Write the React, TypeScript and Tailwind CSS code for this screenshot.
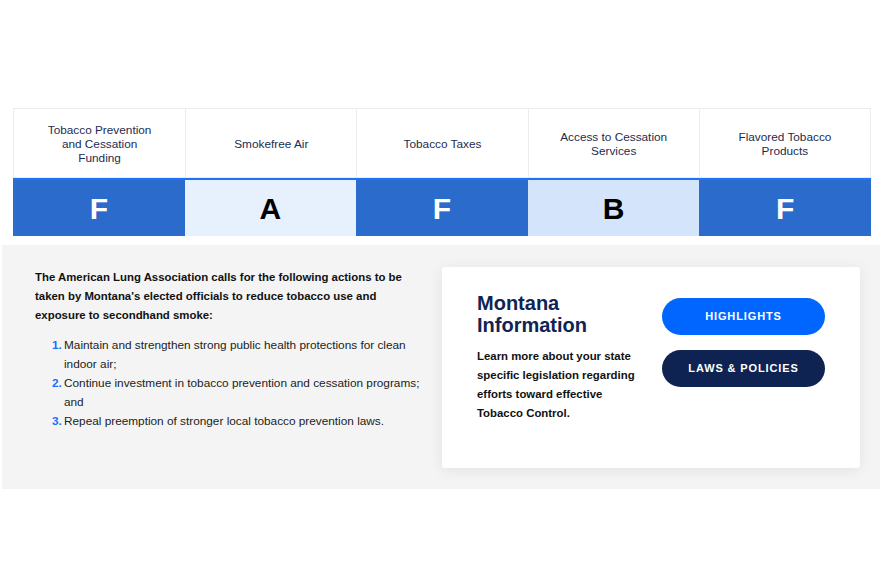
const grades = [
  { label: 'Tobacco Prevention and Cessation Funding', grade: 'F', tone: 'bg-[#2a6bcc] text-white' },
  { label: 'Smokefree Air', grade: 'A', tone: 'bg-[#e7f0fd] text-black' },
  { label: 'Tobacco Taxes', grade: 'F', tone: 'bg-[#2a6bcc] text-white' },
  { label: 'Access to Cessation Services', grade: 'B', tone: 'bg-[#d4e4fa] text-black' },
  { label: 'Flavored Tobacco Products', grade: 'F', tone: 'bg-[#2a6bcc] text-white' },
];

const actions = [
  'Maintain and strengthen strong public health protections for clean indoor air;',
  'Continue investment in tobacco prevention and cessation programs; and',
  'Repeal preemption of stronger local tobacco prevention laws.',
];

export default function App() {
  return (
    <div className="w-[880px] h-[563px] bg-white font-['Liberation_Sans',Arial,sans-serif] overflow-hidden">
      {/* grade table */}
      <div className="pt-[108px] pl-[13px] pr-[9px]">
        <div className="grid grid-cols-5 border border-[#ececec]">
          {grades.map((g, i) => (
            <div
              key={g.label}
              className={`h-[68px] flex items-center justify-center px-[28px] pt-[2px] text-center text-[11.8px] leading-[14px] text-[#1d2b4f] ${i > 0 ? 'border-l border-[#ececec]' : ''}`}
            >
              {g.label}
            </div>
          ))}
        </div>
        <div className="grid grid-cols-5 border-t-2 border-[#1f74f5]">
          {grades.map((g) => (
            <div
              key={g.label}
              className={`h-[56px] flex items-center justify-center text-[30px] font-bold ${g.tone}`}
            >
              {g.grade}
            </div>
          ))}
        </div>
      </div>

      {/* actions + state info */}
      <div className="mt-[9px] ml-[2px] h-[244px] bg-[#f4f4f4] flex">
        <div className="flex-1 pl-[33px] pr-[14px] pt-[23px]">
          <p className="text-[11.4px] leading-[19px] font-bold text-[#111]">
            The American Lung Association calls for the following actions to be taken by Montana's elected officials to reduce tobacco use and exposure to secondhand smoke:
          </p>
          <ol className="mt-[11px] pl-[17px] text-[11.8px] leading-[19px] text-[#222]">
            {actions.map((a, i) => (
              <li key={i} className="flex">
                <span className="w-[12px] shrink-0 font-bold text-[#1a6dff]">{i + 1}.</span>
                <span>{a}</span>
              </li>
            ))}
          </ol>
        </div>

        <div className="mt-[22px] mr-[20px] w-[418px] h-[201px] bg-white rounded-[3px] shadow-[0_2px_14px_rgba(0,0,0,0.08)] flex pl-[35px] pr-[35px] pt-[25px]">
          <div className="w-[165px]">
            <h2 className="text-[20px] leading-[22px] font-bold text-[#0f2454]">
              Montana
              <br />
              Information
            </h2>
            <p className="mt-[11px] text-[11.4px] leading-[19px] font-bold text-[#111]">
              Learn more about your state specific legislation regarding efforts toward effective Tobacco Control.
            </p>
          </div>
          <div className="ml-auto pt-[6px] flex flex-col gap-[15px]">
            <button className="w-[163px] h-[37px] rounded-full bg-[#0066ff] text-white text-[11px] font-bold tracking-[0.08em]">
              HIGHLIGHTS
            </button>
            <button className="w-[163px] h-[37px] rounded-full bg-[#0e2352] text-white text-[11px] font-bold tracking-[0.08em]">
              LAWS &amp; POLICIES
            </button>
          </div>
        </div>
      </div>
    </div>
  );
}
